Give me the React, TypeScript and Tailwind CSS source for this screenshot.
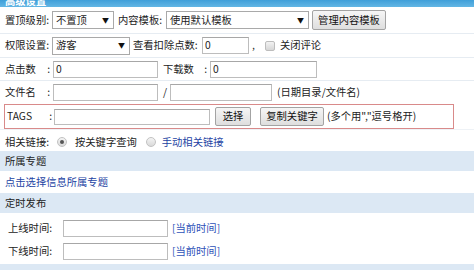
import React from 'react'

const FONT = { fontFamily: '"Noto Sans CJK SC", "Liberation Sans", sans-serif' }

function Select({ value, width }: { value: string; width: string }) {
  return (
    <div className={`${width} flex h-[18px] items-center justify-between border border-[#a9a9a9] bg-white pl-[3px] pr-[4px]`}>
      <span>{value}</span>
      <span className="text-[7px] text-[#111]">▼</span>
    </div>
  )
}

function Input({ width, value = '', height = 'h-[17px]' }: { width: string; value?: string; height?: string }) {
  return (
    <div className={`${width} ${height} flex items-center border border-[#bdbdbd] border-t-[#a7a7a7] bg-white pl-[2px]`}>
      {value}
    </div>
  )
}

function Button({ label, width, height = 'h-[20px]' }: { label: string; width: string; height?: string }) {
  return (
    <div className={`${width} ${height} flex items-center justify-center rounded-[2px] border border-[#a3a3a3] bg-gradient-to-b from-[#f6f6f6] to-[#dedede] text-[#111]`}>
      {label}
    </div>
  )
}

function Label({ text, colon = false }: { text: string; colon?: boolean }) {
  if (colon) {
    return (
      <span className="flex w-[47px] shrink-0 justify-between pr-[2px]">
        <span>{text}</span>
        <span>:</span>
      </span>
    )
  }
  return <span className="w-[47px] shrink-0">{text}</span>
}

function Radio({ checked }: { checked?: boolean }) {
  return (
    <div className="flex h-[10px] w-[10px] items-center justify-center rounded-full border border-[#c2c2c2] bg-gradient-to-b from-[#f4f4f4] to-[#d9d9d9]">
      {checked && <div className="h-[4px] w-[4px] rounded-full bg-[#555]" />}
    </div>
  )
}

export default function App() {
  return (
    <div className="h-[270px] w-[474px] overflow-hidden bg-white text-[10.3px] leading-none text-[#222]" style={FONT}>
      {/* section title, cut off by the scroll edge */}
      <div className="flex h-[7px] items-end overflow-hidden bg-gradient-to-b from-[#3f9fd9] to-[#62b6e4] pl-[5px]">
        <span className="mb-[1px] font-bold text-white">高级设置</span>
      </div>

      <div className="flex h-[27px] items-center border-b border-[#e6ecf2] px-[5px]">
        <Label text="置顶级别:" />
        <Select value="不置顶" width="w-[62px]" />
        <span className="ml-[4px] w-[48px]">内容模板:</span>
        <Select value="使用默认模板" width="w-[143px]" />
        <div className="ml-[3px]">
          <Button label="管理内容模板" width="w-[74px]" />
        </div>
      </div>

      <div className="flex h-[24px] items-center border-b border-[#e6ecf2] px-[5px]">
        <Label text="权限设置:" />
        <Select value="游客" width="w-[78px]" />
        <span className="ml-[3px] w-[69px]">查看扣除点数:</span>
        <Input width="w-[47px]" value="0" />
        <span className="ml-[3px]">,</span>
        <div className="ml-[10px] h-[10px] w-[10px] rounded-[2px] border border-[#bdbdbd] bg-gradient-to-b from-[#f2f2f2] to-[#d6d6d6]" />
        <span className="ml-[5px]">关闭评论</span>
      </div>

      <div className="flex h-[23px] items-center border-b border-[#e6ecf2] px-[5px]">
        <Label text="点击数" colon />
        <div className="ml-[1px]">
          <Input width="w-[105px]" value="0" />
        </div>
        <span className="ml-[5px] flex w-[47px] justify-between pr-[3px]">
          <span>下载数</span>
          <span>:</span>
        </span>
        <Input width="w-[107px]" value="0" />
      </div>

      <div className="flex h-[23px] items-center px-[5px]">
        <Label text="文件名" colon />
        <div className="ml-[1px]">
          <Input width="w-[105px]" />
        </div>
        <span className="ml-[5px] w-[7px]">/</span>
        <Input width="w-[102px]" />
        <span className="ml-[5px]">(日期目录/文件名)</span>
      </div>

      <div className="flex h-[26px] items-stretch border-b border-[#eef2f6] pl-[4px]">
        <div className="flex w-[450px] items-center border border-[#d98a8a] pl-[2px]">
          <Label text="TAGS" colon />
          <Input width="w-[156px]" height="h-[16px]" />
          <div className="ml-[5px]">
            <Button label="选择" width="w-[36px]" height="h-[19px]" />
          </div>
          <div className="ml-[9px]">
            <Button label="复制关键字" width="w-[64px]" height="h-[19px]" />
          </div>
          <span className="ml-[3px]">(多个用","逗号格开)</span>
        </div>
      </div>

      <div className="flex h-[21px] items-center px-[5px] pt-[3px]">
        <span className="w-[52px] shrink-0">相关链接:</span>
        <Radio checked />
        <span className="ml-[8px]">按关键字查询</span>
        <div className="ml-[9px]">
          <Radio />
        </div>
        <span className="ml-[6px] text-[#2443a3]">手动相关链接</span>
      </div>

      <div className="flex h-[20px] items-center bg-[#dce8f4] px-[5px]">所属专题</div>

      <div className="flex h-[22px] items-center px-[5px] text-[#2443a3]">点击选择信息所属专题</div>

      <div className="flex h-[20px] items-center bg-[#dce8f4] px-[5px]">定时发布</div>

      <div className="px-[8px] pb-[1px] pt-[4px]">
        {['上线时间:', '下线时间:'].map((label) => (
          <div key={label} className="flex h-[23px] items-center">
            <span className="w-[55px] shrink-0">{label}</span>
            <Input width="w-[105px]" />
            <span className="ml-[4px] text-[#2d52b8]">[当前时间]</span>
          </div>
        ))}
      </div>

      <div className="h-[20px] bg-[#dce8f4]" />
    </div>
  )
}
